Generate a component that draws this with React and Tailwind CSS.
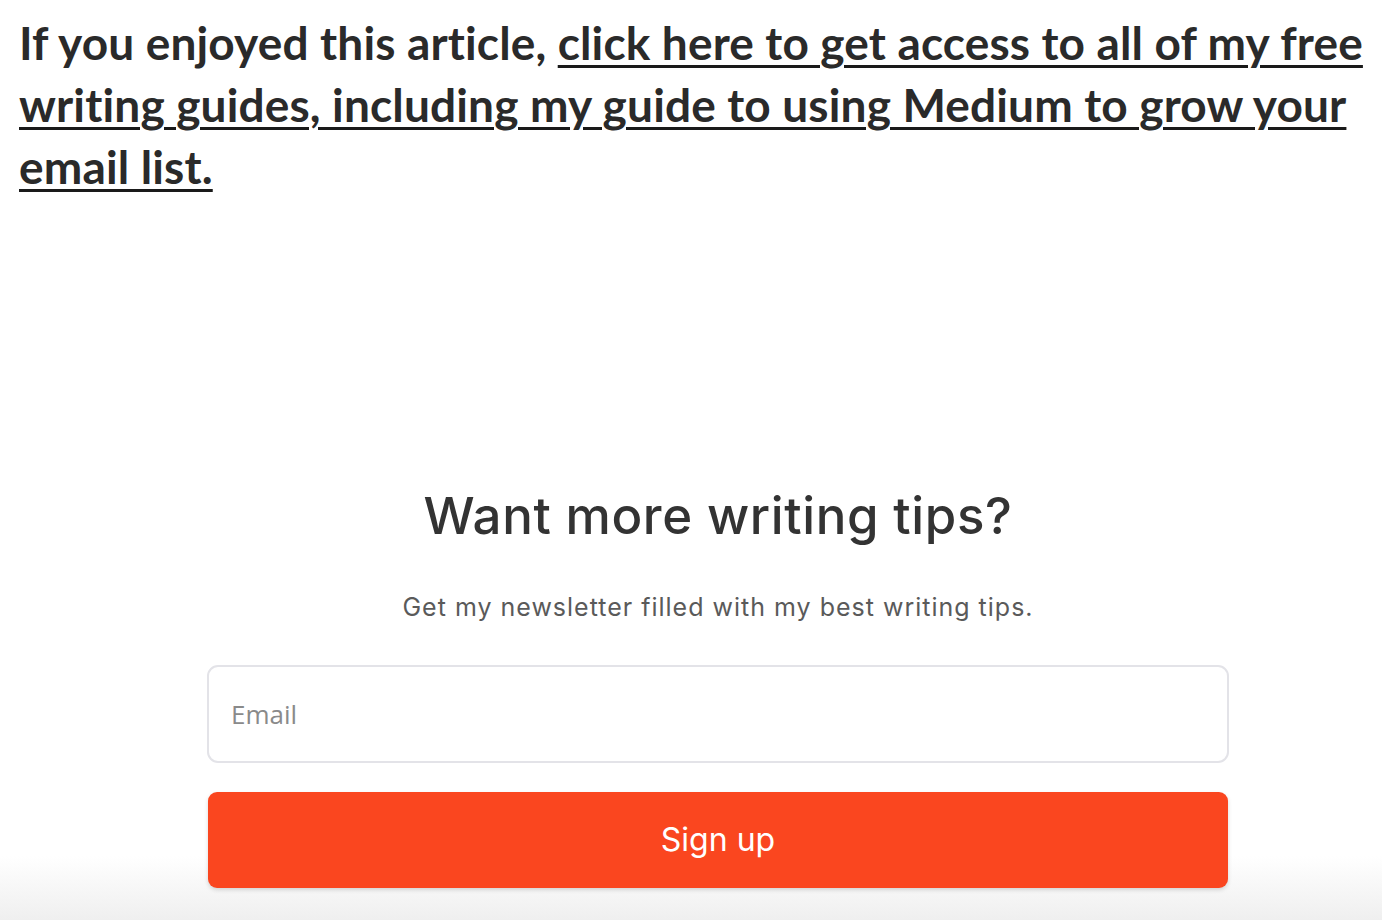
export default function App() {
  return (
    <div className="w-[1382px] h-[920px] overflow-hidden bg-white relative">
      <div className="absolute left-0 right-0 bottom-0 h-[64px] bg-gradient-to-b from-white to-[#efefef]"></div>
      <div className="relative">
        <p
          className="pl-[19px] pr-[12px] pt-[12px] text-[46px] leading-[62px] font-bold text-[#2a2a2a] tracking-[0.15px]"
          style={{ fontFamily: 'Lato, "Open Sans", sans-serif' }}
        >
          If you enjoyed this article,{" "}
          <a className="underline decoration-[3px] underline-offset-[5px] decoration-[#1a1a1a]" href="#">
            click here to get access to all of my free writing guides, including my guide to using Medium to grow your email list.
          </a>
        </p>
        <div className="ml-[207px] w-[1022px] mt-[288px] flex flex-col items-center" style={{ fontFamily: 'Inter, sans-serif' }}>
          <h2 className="text-[51px] leading-[60px] font-medium text-[#333333] tracking-[0.6px]">Want more writing tips?</h2>
          <p className="mt-[45px] text-[25px] leading-[32px] text-[#5a5a5a] tracking-[1px]">Get my newsletter filled with my best writing tips.</p>
          <div className="mt-[42px] w-full h-[98px] rounded-[11px] border-2 border-[#e3e3e8] bg-white flex items-center px-[22px]">
            <span className="text-[26px] text-[#8a8a8a]" style={{ fontFamily: '"Open Sans", sans-serif' }}>Email</span>
          </div>
          <button className="mt-[29px] w-[1020px] h-[96px] rounded-[9px] bg-[#fa461f] shadow-[0_2px_4px_rgba(0,0,0,0.15)] text-white text-[32px] flex items-center justify-center">
            Sign up
          </button>
        </div>
      </div>
    </div>
  );
}
